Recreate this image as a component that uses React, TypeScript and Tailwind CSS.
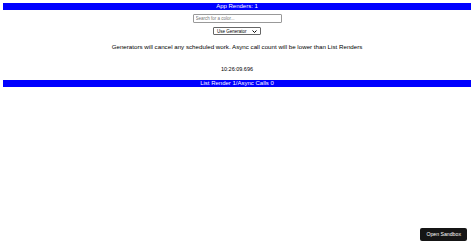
import React from 'react';

const App: React.FC = () => {
  return (
    <div className="relative h-[248px] w-[474px] bg-white font-['Liberation_Sans',Arial,sans-serif] text-black">
      <div className="px-[3px] pt-[3px]">
        <div className="bg-[#0000ff] text-center text-[6px] leading-[7px] text-white">App Renders: 1</div>

        <div className="mt-[4px] flex justify-center">
          <input
            placeholder="Search for a color..."
            className="h-[9px] w-[89px] rounded-[1px] border border-[#999] px-[2px] text-[4.5px] leading-[5px] outline-none placeholder:text-[#777]"
          />
        </div>

        <div className="mt-[4px] flex justify-center">
          <div className="flex h-[8px] w-[48px] items-center justify-between rounded-[1px] border border-[#666] px-[3px] text-[4.5px] leading-[5px]">
            <span>Use Generator</span>
            <svg width="5" height="3" viewBox="0 0 10 6" fill="none" stroke="black" strokeWidth="2">
              <path d="M1 1l4 4 4-4" />
            </svg>
          </div>
        </div>

        <p className="mt-[8px] text-center text-[6.2px] leading-[7px]">
          Generators will cancel any scheduled work. Async call count will be lower than List Renders
        </p>

        <p className="mt-[16px] text-center text-[5.5px] leading-[7px]">10:26:09.696</p>

        <div className="mt-[7px] bg-[#0000ff] text-center text-[6px] leading-[7px] text-white">List Render 1/Async Calls 0</div>
      </div>

      <button className="absolute bottom-[7px] right-[7px] rounded-[2px] bg-[#151515] px-[6px] py-[4px] text-[5.2px] leading-[5px] text-white">
        Open Sandbox
      </button>
    </div>
  );
};

export default App;
